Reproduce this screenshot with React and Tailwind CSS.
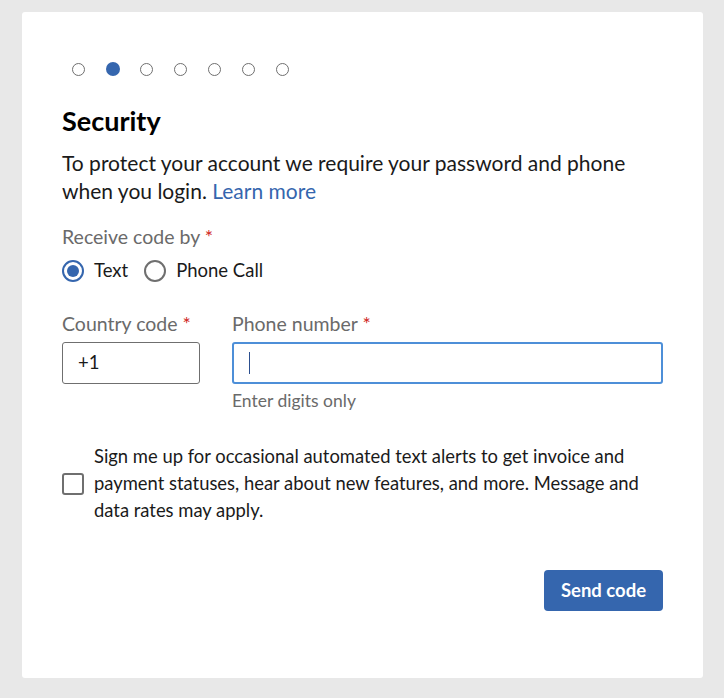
import { useState } from 'react';

function App() {
  const [method, setMethod] = useState('text');
  const [optIn, setOptIn] = useState(false);
  const steps = [0, 1, 2, 3, 4, 5, 6];
  const current = 1;

  return (
    <div className="min-h-screen bg-[#e8e8e8] pt-3 pl-[22px] pr-[21px] pb-5" style={{ fontFamily: 'Lato, "Open Sans", sans-serif' }}>
      <div className="bg-white rounded-[3px] h-[666px] px-10 pt-[50px]">
        {/* Step dots */}
        <div className="flex items-center gap-[21px] pl-[10px] h-[14px]">
          {steps.map((s) =>
            s === current ? (
              <span key={s} className="w-[14px] h-[14px] -mx-[0.5px] rounded-full bg-[#3566ae]" />
            ) : (
              <span key={s} className="w-[13px] h-[13px] rounded-full border border-[#6f6f6f] bg-white" />
            )
          )}
        </div>

        <h1 className="mt-[29px] text-[27px] font-bold text-black leading-[32px]">Security</h1>
        <p className="mt-[12px] text-[21px] leading-[28px] text-[#1a1a1a] max-w-[580px]">
          To protect your account we require your password and phone when you login.{' '}
          <a href="#" className="text-[#3566ae]">Learn more</a>
        </p>

        <div className="mt-[20px] text-[19.5px] text-[#6a6a6a] leading-[24px]">
          Receive code by <span className="text-[#d0271d]">*</span>
        </div>
        <div className="mt-[10px] flex items-center h-[24px] text-[18.5px] text-[#1a1a1a]">
          <label className="flex items-center gap-[10px] cursor-pointer" onClick={() => setMethod('text')}>
            <span className={`w-[22px] h-[22px] rounded-full border-2 flex items-center justify-center ${method === 'text' ? 'border-[#3566ae]' : 'border-[#6f6f6f]'}`}>
              {method === 'text' && <span className="w-[12px] h-[12px] rounded-full bg-[#3566ae]" />}
            </span>
            Text
          </label>
          <label className="flex items-center gap-[10px] ml-[16px] cursor-pointer" onClick={() => setMethod('call')}>
            <span className={`w-[22px] h-[22px] rounded-full border-2 flex items-center justify-center ${method === 'call' ? 'border-[#3566ae]' : 'border-[#6f6f6f]'}`}>
              {method === 'call' && <span className="w-[12px] h-[12px] rounded-full bg-[#3566ae]" />}
            </span>
            Phone Call
          </label>
        </div>

        <div className="mt-[29px] flex gap-8">
          <div className="w-[138px]">
            <div className="text-[19.5px] text-[#6a6a6a] leading-[24px]">
              Country code <span className="text-[#d0271d]">*</span>
            </div>
            <div className="mt-[6px] h-[42px] border border-[#6f6f6f] rounded-[3px] flex items-center px-[15px] text-[18.5px] text-[#1a1a1a]">
              +1
            </div>
          </div>
          <div className="flex-1">
            <div className="text-[19.5px] text-[#6a6a6a] leading-[24px]">
              Phone number <span className="text-[#d0271d]">*</span>
            </div>
            <div className="mt-[6px] h-[42px] border-2 border-[#4d8fd8] rounded-[3px] flex items-center px-[15px]">
              <span className="w-px h-[22px] bg-[#2c4f8f]" />
            </div>
            <div className="mt-[6px] text-[17.5px] text-[#6a6a6a] leading-[22px]">Enter digits only</div>
          </div>
        </div>

        <div className="mt-[31px] flex items-center gap-[10px]">
          <span
            onClick={() => setOptIn(!optIn)}
            className="shrink-0 w-[22px] h-[22px] rounded-[3px] border-2 border-[#6f6f6f] bg-white cursor-pointer"
          />
          <p className="text-[18.4px] leading-[27px] text-[#1a1a1a]">
            Sign me up for occasional automated text alerts to get invoice and payment statuses, hear about new features, and more. Message and data rates may apply.
          </p>
        </div>

        <div className="mt-[46px] flex justify-end">
          <button className="h-[41px] w-[119px] rounded-[4px] bg-[#3566ae] text-white font-bold text-[18.5px]">
            Send code
          </button>
        </div>
      </div>
    </div>
  );
}

export default App;
